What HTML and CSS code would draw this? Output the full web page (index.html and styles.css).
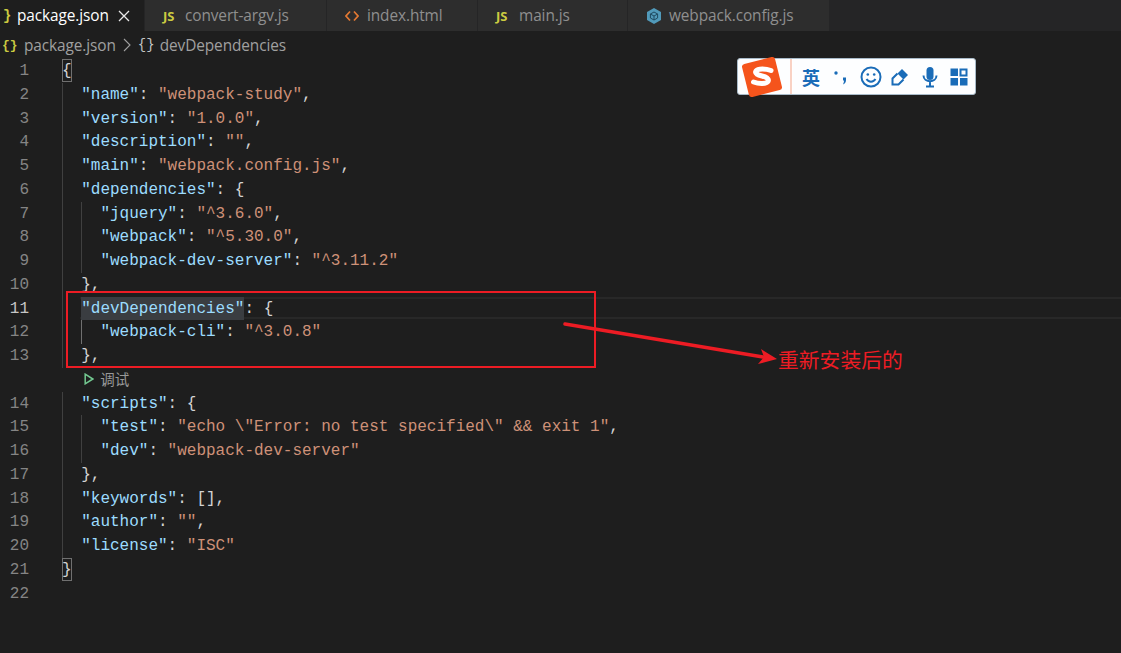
FILE: index.html
```html
<!DOCTYPE html>
<html lang="en">
<head>
<meta charset="utf-8">
<title>package.json</title>
<link rel="stylesheet" href="styles.css">
</head>
<body>
<div class="tabs">
  <div class="tab active tab-pkg"><span class="ic-brace">}</span><span class="tab-name">package.json</span><svg class="close" viewBox="0 0 12 12"><path d="M1 1l10 10M11 1L1 11"/></svg></div>
  <div class="tab tab-argv"><span class="ic-js">JS</span><span class="tab-name">convert-argv.js</span></div>
  <div class="tab tab-index"><svg class="ic-html" viewBox="0 0 14 12"><path d="M5 1.500L1 6l4 4.500M9 1.500L13 6l-4 4.500"/></svg><span class="tab-name">index.html</span></div>
  <div class="tab tab-main"><span class="ic-js">JS</span><span class="tab-name">main.js</span></div>
  <div class="tab tab-webpack"><svg class="ic-wp" viewBox="0 0 16 16"><path class="wp-fill" d="M8 0l7 4v8l-7 4-7-4V4z"/><path class="wp-line" d="M8 4l3.600 2v4L8 12l-3.600-2V6zM4.400 6L8 8l3.600-2M8 8v4"/></svg><span class="tab-name">webpack.config.js</span></div>
</div>
<div class="crumbs"><span class="ic-crumb">{}</span><span>package.json</span><svg class="chev" viewBox="0 0 8 14"><path d="M1 1l6 6-6 6"/></svg><span class="ic-crumb2">{}</span><span>devDependencies</span></div>
<div class="code">
  <div class="line"><span class="num">1</span><span class="t p match">{</span></div>
  <div class="line"><span class="num">2</span><i class="ind"></i><span class="t"><b class="k">"name"</b><b class="p">: </b><b class="s">"webpack-study"</b><b class="p">,</b></span></div>
  <div class="line"><span class="num">3</span><i class="ind"></i><span class="t"><b class="k">"version"</b><b class="p">: </b><b class="s">"1.0.0"</b><b class="p">,</b></span></div>
  <div class="line"><span class="num">4</span><i class="ind"></i><span class="t"><b class="k">"description"</b><b class="p">: </b><b class="s">""</b><b class="p">,</b></span></div>
  <div class="line"><span class="num">5</span><i class="ind"></i><span class="t"><b class="k">"main"</b><b class="p">: </b><b class="s">"webpack.config.js"</b><b class="p">,</b></span></div>
  <div class="line"><span class="num">6</span><i class="ind"></i><span class="t"><b class="k">"dependencies"</b><b class="p">: {</b></span></div>
  <div class="line"><span class="num">7</span><i class="ind"></i><i class="ind"></i><span class="t"><b class="k">"jquery"</b><b class="p">: </b><b class="s">"^3.6.0"</b><b class="p">,</b></span></div>
  <div class="line"><span class="num">8</span><i class="ind"></i><i class="ind"></i><span class="t"><b class="k">"webpack"</b><b class="p">: </b><b class="s">"^5.30.0"</b><b class="p">,</b></span></div>
  <div class="line"><span class="num">9</span><i class="ind"></i><i class="ind"></i><span class="t"><b class="k">"webpack-dev-server"</b><b class="p">: </b><b class="s">"^3.11.2"</b></span></div>
  <div class="line"><span class="num">10</span><i class="ind"></i><span class="t"><b class="p">},</b></span></div>
  <div class="line current"><span class="num">11</span><i class="ind"></i><span class="t"><b class="k sel">"devDependencies"</b><b class="p">: {</b></span></div>
  <div class="line"><span class="num">12</span><i class="ind"></i><i class="ind ind-active"></i><span class="t"><b class="k">"webpack-cli"</b><b class="p">: </b><b class="s">"^3.0.8"</b></span></div>
  <div class="line"><span class="num">13</span><i class="ind"></i><span class="t"><b class="p">},</b></span></div>
  <div class="line lens"><span class="num"></span><i class="ind ind-none"></i><span class="lens-body"><svg class="play" viewBox="0 0 10 12"><path d="M1.200 1.200l7.600 4.800-7.600 4.800z"/></svg>调试</span></div>
  <div class="line"><span class="num">14</span><i class="ind"></i><span class="t"><b class="k">"scripts"</b><b class="p">: {</b></span></div>
  <div class="line"><span class="num">15</span><i class="ind"></i><i class="ind"></i><span class="t"><b class="k">"test"</b><b class="p">: </b><b class="s">"echo \"Error: no test specified\" &amp;&amp; exit 1"</b><b class="p">,</b></span></div>
  <div class="line"><span class="num">16</span><i class="ind"></i><i class="ind"></i><span class="t"><b class="k">"dev"</b><b class="p">: </b><b class="s">"webpack-dev-server"</b></span></div>
  <div class="line"><span class="num">17</span><i class="ind"></i><span class="t"><b class="p">},</b></span></div>
  <div class="line"><span class="num">18</span><i class="ind"></i><span class="t"><b class="k">"keywords"</b><b class="p">: [],</b></span></div>
  <div class="line"><span class="num">19</span><i class="ind"></i><span class="t"><b class="k">"author"</b><b class="p">: </b><b class="s">""</b><b class="p">,</b></span></div>
  <div class="line"><span class="num">20</span><i class="ind"></i><span class="t"><b class="k">"license"</b><b class="p">: </b><b class="s">"ISC"</b></span></div>
  <div class="line"><span class="num">21</span><span class="t p match">}</span></div>
  <div class="line"><span class="num">22</span></div>
</div>

<div class="ime">
  <svg class="ime-logo" viewBox="0 0 42 42"><rect x="4" y="4" width="34" height="34" rx="3" transform="rotate(-14 21 21)" class="logo-bg"/><path class="logo-s" d="M30 14.500c-5-2-13-2.500-15 .5-1.500 2.500 2 4 6 5s7.500 2.500 6 5.500c-1.500 2.500-9 2.500-14.500.5"/></svg>
  <span class="ime-sep"></span>
  <span class="ime-ying">英</span>
  <svg class="ime-i ime-punc" viewBox="0 0 14 16"><circle cx="3" cy="4" r="1.700"/><path d="M10 8.500h3v2.500c0 2-1 3.500-3 4.500 .6-1.500 1-2.500 1-4h-1z"/></svg>
  <svg class="ime-i ime-smile" viewBox="0 0 22 22"><circle cx="11" cy="11" r="9.500" class="st"/><circle cx="7.800" cy="8.500" r="1.300"/><circle cx="14.200" cy="8.500" r="1.300"/><path class="st" d="M6.500 13c2 3.500 7 3.500 9 0"/></svg>
  <svg class="ime-i ime-pen" viewBox="0 0 18 18"><path d="M11 1l6 6-4.500 4.500-6-6z"/><path class="st" d="M6.500 5.500L1.500 10.500V16.500h6l5-5"/></svg>
  <svg class="ime-i ime-mic" viewBox="0 0 16 22"><rect x="4.500" y="1" width="7" height="13" rx="3.500"/><path class="st" d="M1.500 9.500c0 7.500 13 7.500 13 0M8 16v4M4 20.500h8"/></svg>
  <svg class="ime-i ime-grid" viewBox="0 0 18 18"><rect x="0.500" y="0.500" width="7.500" height="7.500"/><rect x="10.500" y="1.500" width="6" height="6" class="st"/><rect x="0.500" y="10" width="7.500" height="7.500"/><rect x="10" y="10" width="7.500" height="7.500"/></svg>
</div>

<div class="note-box"></div>
<svg class="arrow" viewBox="0 0 220 50"><path class="shaft" d="M2 2L200 35"/><path class="head" d="M214 37L195 42 201 35 198 27z"/></svg>
<div class="note-text">重新安装后的</div>
</body>
</html>
```
FILE: styles.css
```css
* { box-sizing: border-box; }
html, body { height: 100%; }
body {
  margin: 0;
  background: #1e1e1e;
  overflow: hidden;
  position: relative;
  font-family: "Open Sans", "Liberation Sans", "Noto Sans CJK SC", sans-serif;
}

/* tabs */
.tabs {
  display: flex;
  height: 31px;
  background: #252526;
  width: 100%;
}
.tab {
  display: flex;
  align-items: center;
  height: 31px;
  background: #2d2d2d;
  border-right: 1px solid #252526;
  color: #8f8f8f;
  font-size: 15.400px;
  letter-spacing: -0.1px;
}
.tab.active { background: #1e1e1e; color: #fff; }
.tab-pkg { width: 145px; padding-left: 3px; }
.tab-argv { width: 182px; padding-left: 18px; }
.tab-index { width: 151px; padding-left: 18px; }
.tab-main { width: 150px; padding-left: 18px; }
.tab-webpack { width: 202px; padding-left: 18px; }
.tab-name { display: block; }
.ic-brace { color: #cbcb41; font-weight: 700; font-size: 14px; width: 14px; font-family: "Liberation Mono", monospace; }
.close { width: 12px; height: 12px; margin-left: 9px; fill: none; stroke: #e8e8e8; stroke-width: 1.300; }
.ic-js { color: #cbcb41; font-weight: 700; font-size: 13px; width: 23px; letter-spacing: 0; }
.tab-argv .ic-js { width: 22px; }
.ic-html { width: 14px; height: 12px; margin-right: 8px; fill: none; stroke: #e37933; stroke-width: 1.700; }
.ic-wp { width: 16px; height: 16px; margin-right: 7px; }
.wp-fill { fill: #519aba; }
.wp-line { fill: none; stroke: #1f4a60; stroke-width: 1; }

/* breadcrumbs */
.crumbs {
  display: flex;
  align-items: center;
  height: 28px;
  padding-left: 2px;
  color: #a0a0a0;
  font-size: 15.400px;
  letter-spacing: -0.1px;
}
.ic-crumb { color: #cbcb41; font-weight: 700; font-size: 13px; width: 22px; font-family: "Liberation Mono", monospace; letter-spacing: 0; }
.ic-crumb2 { color: #c5c5c5; font-size: 14px; width: 22px; font-family: "Liberation Mono", monospace; letter-spacing: 0; }
.chev { width: 8px; height: 14px; margin: 0 7px; fill: none; stroke: #a0a0a0; stroke-width: 1.100; }

/* code */
.code {
  font-family: "Liberation Mono", "DejaVu Sans Mono", monospace;
  font-size: 16px;
}
.line {
  display: flex;
  height: 23.750px;
  line-height: 25.750px;
  white-space: pre;
}
.num {
  width: 62px;
  padding-right: 33px;
  text-align: right;
  color: #858585;
  flex: none;
}
.current .num { color: #c6c6c6; }
.current { position: relative; }
.current::after {
  content: "";
  position: absolute;
  left: 80px;
  right: 0;
  top: 0;
  bottom: 1px;
  border-top: 2px solid #282828;
  border-bottom: 2px solid #282828;
  z-index: 0;
}
.ind {
  flex: none;
  width: 19.200px;
  border-left: 1px solid #404040;
}
.ind-active { border-left-color: #707070; }
.ind-none { border-left-color: transparent; }
.t { position: relative; z-index: 1; }
.t b { font-weight: 400; }
.k { color: #9cdcfe; }
.s { color: #ce9178; }
.p { color: #d4d4d4; }
.sel { background: #3a3d41; display: inline-block; height: 23.750px; }
.match { outline: 1px solid #707070; outline-offset: -1px; display: block; width: 10px; height: 23px; }
.lens-body {
  display: flex;
  align-items: center;
  gap: 6px;
  height: 23.750px;
  padding: 0 0 1px 3px;
  font-family: "Noto Sans CJK SC", sans-serif;
  font-size: 14.500px;
  line-height: 1;
  color: #999;
}
.play { width: 10px; height: 12px; fill: none; stroke: #73c991; stroke-width: 1.500; }

/* IME bar, floating over the editor */
.ime {
  position: absolute;
  left: 737px;
  top: 58px;
  width: 239px;
  height: 37px;
  background: #fdfeff;
  border: 1px solid #a9bbc9;
  border-radius: 3px;
  display: flex;
  align-items: center;
  color: #1a6cb8;
}
.ime-logo { width: 42px; height: 42px; flex: none; margin-left: 3px; }
.logo-bg { fill: #f5541c; }
.logo-s { fill: none; stroke: #fff; stroke-width: 5; stroke-linecap: round; }
.ime-sep { width: 3px; height: 35px; background: #f9d2c4; margin-left: 7px; flex: none; border-right: 1px solid #fff; }
.ime-ying { font-family: "Noto Sans CJK SC", sans-serif; font-weight: 700; font-size: 18px; margin-left: 9px; line-height: 1; width: 18px; }
.ime-i { flex: none; fill: #1a6cb8; }
.st { fill: none; stroke: #1a6cb8; stroke-width: 2; }
.ime-punc { width: 14px; height: 16px; margin-left: 13px; }
.ime-smile { width: 22px; height: 22px; margin-left: 13px; }
.ime-pen { width: 18px; height: 18px; margin-left: 9px; }
.ime-mic { width: 16px; height: 22px; margin-left: 13px; }
.ime-grid { width: 18px; height: 18px; margin-left: 12px; }

/* annotations drawn over the screenshot */
.note-box {
  position: absolute;
  left: 66px;
  top: 291px;
  width: 530px;
  height: 77px;
  border: 2px solid #ed1c24;
  z-index: 2;
}
.arrow {
  position: absolute;
  left: 563px;
  top: 322px;
  width: 220px;
  height: 50px;
  z-index: 3;
  overflow: visible;
}
.shaft { stroke: #ed1c24; stroke-width: 3.500; stroke-linecap: round; fill: none; }
.head { fill: #ed1c24; }
.note-text {
  position: absolute;
  left: 778px;
  top: 344px;
  font-family: "Noto Sans CJK SC", sans-serif;
  font-size: 20.800px;
  line-height: 30px;
  color: #ed1c24;
  z-index: 3;
}
```
